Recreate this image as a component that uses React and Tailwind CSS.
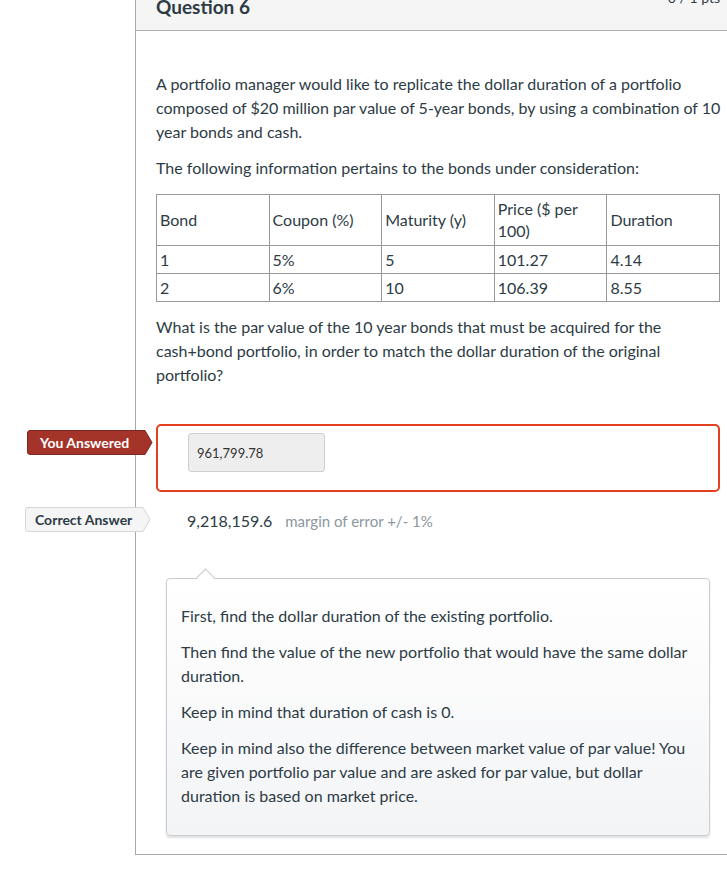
const rows = [
  ['1', '5%', '5', '101.27', '4.14'],
  ['2', '6%', '10', '106.39', '8.55'],
];

const heads = ['Bond', 'Coupon (%)', 'Maturity (y)', 'Price ($ per 100)', 'Duration'];

function Badge({ label, fill, stroke, text, width, pad }) {
  return (
    <div className="relative h-[25px]" style={{ width: width + 4 }}>
      <svg className="absolute inset-0" width={width + 4} height="25" viewBox={`0 0 ${width + 4} 25`}>
        <path
          d={`M3 0.5 H${width - 4} L${width + 3} 12.5 L${width - 4} 24.5 H3 Q0.5 24.5 0.5 22 V3 Q0.5 0.5 3 0.5 Z`}
          fill={fill}
          stroke={stroke}
        />
      </svg>
      <span className={`relative flex h-full items-center text-[14px] font-bold ${pad} ${text}`}>{label}</span>
    </div>
  );
}

export default function App() {
  return (
    <div className="min-h-screen w-[727px] overflow-hidden bg-white text-[#2d3b45] font-['Lato','Open_Sans',sans-serif]">
      <div className="ml-[135px] mt-[-16px] w-[606px] border border-[#a8a8a8]">
        {/* Header */}
        <div className="flex h-[46px] items-center justify-between border-b border-[#b0b0b0] bg-[#f5f5f5] pl-5 pr-[20px]">
          <span className="text-[19px] font-bold text-[#2d3b45]">Question 6</span>
          <span className="relative top-[-10px] text-[14px] text-[#2d3b45]">0 / 1 pts</span>
        </div>

        {/* Body */}
        <div className="px-5 pb-[18px] pt-[41px] text-[16px] leading-6">
          <p className="mr-[-6px]">
            A portfolio manager would like to replicate the dollar duration of a portfolio composed of $20 million par
            value of 5-year bonds, by using a combination of 10 year bonds and cash.
          </p>
          <p className="mt-3">The following information pertains to the bonds under consideration:</p>

          <table className="mt-[14px] w-[564px] table-fixed border-collapse text-[16px]">
            <thead>
              <tr>
                {heads.map((h) => (
                  <td key={h} className="border border-[#999] px-[3px] py-[3px] font-normal leading-[22px]">
                    {h}
                  </td>
                ))}
              </tr>
            </thead>
            <tbody>
              {rows.map((r) => (
                <tr key={r[0]}>
                  {r.map((c, i) => (
                    <td key={i} className="border border-[#999] px-[3px] pb-[2px] pt-[3px] leading-[22px]">
                      {c}
                    </td>
                  ))}
                </tr>
              ))}
            </tbody>
          </table>

          <p className="mt-[13px] pr-[50px]">
            What is the par value of the 10 year bonds that must be acquired for the cash+bond portfolio, in order to
            match the dollar duration of the original portfolio?
          </p>

          {/* You answered */}
          <div className="relative mt-[37px]">
            <div className="absolute left-[-129px] top-[6px]">
              <Badge label="You Answered" fill="#a4342a" stroke="#7c2820" text="text-white" width={122} pad="pl-[13px]" />
            </div>
            <div className="h-[68px] rounded-[5px] border-2 border-[#e3401f] pl-[30px] pt-[7px]">
              <div className="flex h-[39px] w-[137px] items-center rounded-[3px] border border-[#cfcfcf] bg-[#eeeeee] pl-[8px] text-[13px] text-[#333]">
                961,799.78
              </div>
            </div>
          </div>

          {/* Correct answer */}
          <div className="relative mt-[15px] flex h-[28px] items-center pl-[31px]">
            <div className="absolute left-[-131px] top-0">
              <Badge label="Correct Answer" fill="#f5f5f5" stroke="#d6d6d6" text="text-[#2d3b45]" width={122} pad="pl-[10px]" />
            </div>
            <span className="text-[16px]">9,218,159.6</span>
            <span className="ml-[13px] text-[15px] text-[#8b969e]">margin of error +/- 1%</span>
          </div>

          {/* Comment */}
          <div className="relative mx-[10px] mt-[43px] rounded-[4px] border border-[#c7cdd1] bg-linear-to-b from-white to-[#f3f4f6] px-[14px] pb-[27px] pt-[25px] text-[16px] shadow-[0_2px_2px_rgba(0,0,0,0.12)]">
            <div className="absolute left-[32px] top-[-8px] h-[13px] w-[13px] rotate-45 border-l border-t border-[#c7cdd1] bg-white" />
            <p>First, find the dollar duration of the existing portfolio.</p>
            <p className="mt-3">Then find the value of the new portfolio that would have the same dollar duration.</p>
            <p className="mt-3">Keep in mind that duration of cash is 0.</p>
            <p className="mt-3">
              Keep in mind also the difference between market value of par value! You are given portfolio par value and
              are asked for par value, but dollar duration is based on market price.
            </p>
          </div>
        </div>
      </div>
    </div>
  );
}
